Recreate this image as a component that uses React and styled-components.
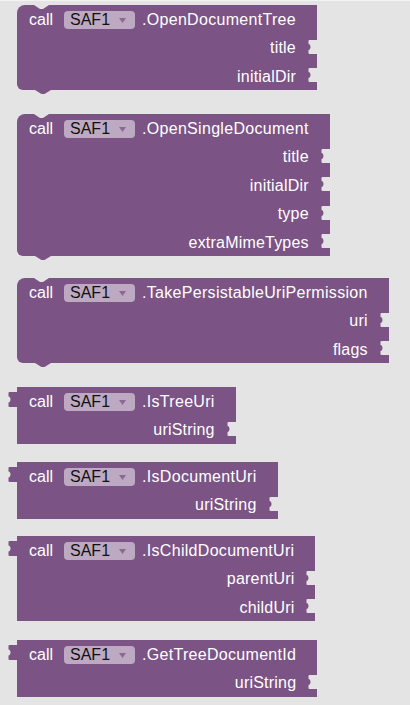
import React from "react";
import styled, { createGlobalStyle } from "styled-components";

const PURPLE = "#7c5385";
const WORKSPACE = "#e4e4e4";

const GlobalStyle = createGlobalStyle`
  html, body {
    margin: 0;
    padding: 0;
    background: ${WORKSPACE};
  }
  body {
    font-family: "Liberation Sans", Arial, sans-serif;
  }
`;

const Workspace = styled.div`
  width: 410px;
  height: 705px;
  box-sizing: border-box;
  overflow: hidden;
  background: ${WORKSPACE};
  border-top: 1px solid #f3f3f3;
  padding: 4px 0 0 17px;
  display: flex;
  flex-direction: column;
  align-items: flex-start;
`;

const Block = styled.div`
  position: relative;
  display: inline-flex;
  flex-direction: column;
  background: ${PURPLE};
  color: #fff;
  font-size: 16px;
  margin-top: ${(p) => p.$gap}px;
  border-radius: ${(p) => (p.$output ? "0" : "8px 0 0 6px")};
`;

const HeaderRow = styled.div`
  display: flex;
  align-items: center;
  box-sizing: border-box;
  height: 28px;
  padding: 2px 21px 0 12px;
  white-space: nowrap;
`;

const Keyword = styled.span`
  line-height: 18px;
`;

const Dropdown = styled.span`
  display: inline-flex;
  align-items: center;
  height: 18px;
  margin-left: 11px;
  padding: 0 9px 0 6px;
  border-radius: 4px;
  background: #bea9c2;
  color: #111;
  line-height: 18px;
`;

const Arrow = styled.svg`
  margin-left: 9px;
  width: 7px;
  height: 5px;
`;

const MethodName = styled.span`
  margin-left: 7px;
  line-height: 18px;
  letter-spacing: 0.3px;
`;

const InputRow = styled.div`
  display: flex;
  align-items: center;
  justify-content: flex-end;
  box-sizing: border-box;
  height: 28.5px;
  padding-top: 2px;
  white-space: nowrap;
`;

const InputLabel = styled.span`
  margin-right: 12px;
  line-height: 18px;
  letter-spacing: 0.2px;
`;

const Socket = styled.svg`
  width: 9px;
  height: 14px;
  flex: none;
  margin-top: -3px;
`;

const PrevNotch = styled.svg`
  position: absolute;
  top: 0;
  left: 17px;
  width: 15px;
  height: 4px;
`;

const NextTab = styled.svg`
  position: absolute;
  top: 100%;
  left: 18px;
  width: 16px;
  height: 4px;
`;

const OutputTab = styled.svg`
  position: absolute;
  top: 5px;
  right: 100%;
  width: 9px;
  height: 15px;
`;

const SOCKET_PATH =
  "M9,0 L1.5,0 Q0.5,0 0.5,1 L0.5,4 C3.2,4 3.2,10 0.5,10 L0.5,13 Q0.5,14 1.5,14 L9,14 Z";
const OUTPUT_PATH =
  "M9,0 L1.5,0 Q0.5,0 0.5,1 L0.5,4.5 C3.2,4.5 3.2,10.5 0.5,10.5 L0.5,14 Q0.5,15 1.5,15 L9,15 Z";

const blocks = [
  { gap: 0, method: "OpenDocumentTree", inputs: ["title", "initialDir"] },
  {
    gap: 24,
    method: "OpenSingleDocument",
    inputs: ["title", "initialDir", "type", "extraMimeTypes"],
  },
  { gap: 22, method: "TakePersistableUriPermission", inputs: ["uri", "flags"] },
  { gap: 24, method: "IsTreeUri", inputs: ["uriString"], output: true },
  { gap: 18.5, method: "IsDocumentUri", inputs: ["uriString"], output: true },
  {
    gap: 17.5,
    method: "IsChildDocumentUri",
    inputs: ["parentUri", "childUri"],
    output: true,
  },
  { gap: 19, method: "GetTreeDocumentId", inputs: ["uriString"], output: true },
];

const MethodBlock = ({ gap, method, inputs, output }) => (
  <Block $gap={gap} $output={output}>
    {output ? (
      <OutputTab viewBox="0 0 9 15">
        <path d={OUTPUT_PATH} fill={PURPLE} />
      </OutputTab>
    ) : (
      <>
        <PrevNotch viewBox="0 0 15 4">
          <path d="M0,0 L6,4 L9,4 L15,0 Z" fill={WORKSPACE} />
        </PrevNotch>
        <NextTab viewBox="0 0 16 4">
          <path d="M0,0 L6.5,4 L9.5,4 L16,0 Z" fill={PURPLE} />
        </NextTab>
      </>
    )}
    <HeaderRow>
      <Keyword>call</Keyword>
      <Dropdown>
        SAF1
        <Arrow viewBox="0 0 7 5">
          <path d="M0,0 L7,0 L3.5,5 Z" fill="#8c6895" />
        </Arrow>
      </Dropdown>
      <MethodName>.{method}</MethodName>
    </HeaderRow>
    {inputs.map((name) => (
      <InputRow key={name}>
        <InputLabel>{name}</InputLabel>
        <Socket viewBox="0 0 9 14">
          <path d={SOCKET_PATH} fill={WORKSPACE} />
        </Socket>
      </InputRow>
    ))}
  </Block>
);

export default function App() {
  return (
    <>
      <GlobalStyle />
      <Workspace>
        {blocks.map((b) => (
          <MethodBlock key={b.method} {...b} />
        ))}
      </Workspace>
    </>
  );
}
